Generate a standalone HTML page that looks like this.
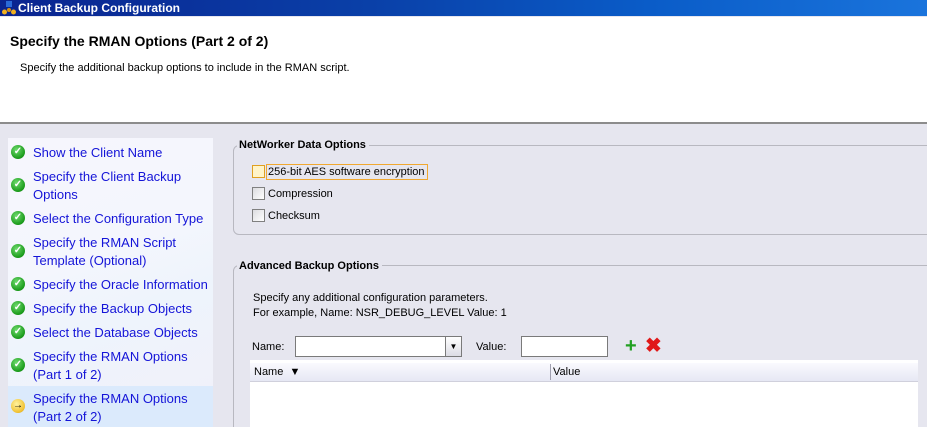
<!DOCTYPE html>
<html><head><style>
html,body{margin:0;width:927px;height:427px;overflow:hidden}
body{background:#e6e6ef;font-family:"Liberation Sans",sans-serif;position:relative}
.abs{position:absolute}
.tb{left:0;top:0;width:927px;height:16px;background:linear-gradient(90deg,#0a2490 0%,#0a40a8 40%,#0a5cc8 70%,#1a74dc 100%);color:#fff;font-weight:bold;font-size:12px;line-height:16px}
.hdr{left:0;top:17px;width:927px;height:105px;background:#fff;border-bottom:2px solid #8c8c8c}
.side{left:8px;top:138px;width:205px;height:289px;background:linear-gradient(160deg,#f6f6fd 0%,#f4f6fd 40%,#eef4fc 60%,#f1f0f9 100%)}
.it{position:absolute;left:25px;color:#1414d8;font-size:13px;line-height:18px}
.ic{position:absolute;left:11px;width:14px;height:14px;border-radius:50%;background:radial-gradient(circle at 40% 35%,#6fdc6f,#1a9a1a 70%,#0d6d0d);color:#fff;font-size:10px;line-height:14px;text-align:center;font-weight:bold}
.fs{border:1px solid #b8b8c0;border-radius:6px}
.lg{position:absolute;background:#e6e6ef;font-weight:bold;font-size:11px;padding:0 3px 0 2px}
.t{position:absolute;font-size:11px;color:#000}
.cb{position:absolute;width:11px;height:11px;border:1px solid #808080;background:linear-gradient(135deg,#dcdce0,#fff)}
</style></head><body>
<div class="abs tb"><span style="position:absolute;left:2px;top:1px;width:14px;height:14px"><svg width="14" height="14"><rect x="4" y="0" width="6" height="6" fill="#2a6ad8"/><circle cx="2.5" cy="11" r="2.5" fill="#f0b020"/><circle cx="11.5" cy="11" r="2.5" fill="#f0b020"/><circle cx="7" cy="9" r="2" fill="#d89010"/></svg></span><span style="position:absolute;left:18px">Client Backup Configuration</span></div>
<div class="abs hdr">
<div class="abs" style="left:10px;top:16px;font-weight:bold;font-size:14px">Specify the RMAN Options (Part 2 of 2)</div>
<div class="abs" style="left:20px;top:45px;font-size:11px">Specify the additional backup options to include in the RMAN script.</div>
</div>
<div class="abs side">
<div class="ic" style="top:7px;left:3px">✓</div><div class="it" style="top:6px">Show the Client Name</div>
<div class="ic" style="top:40px;left:3px">✓</div><div class="it" style="top:30px">Specify the Client Backup<br>Options</div>
<div class="ic" style="top:73px;left:3px">✓</div><div class="it" style="top:72px">Select the Configuration Type</div>
<div class="ic" style="top:106px;left:3px">✓</div><div class="it" style="top:96px">Specify the RMAN Script<br>Template (Optional)</div>
<div class="ic" style="top:139px;left:3px">✓</div><div class="it" style="top:138px">Specify the Oracle Information</div>
<div class="ic" style="top:163px;left:3px">✓</div><div class="it" style="top:162px">Specify the Backup Objects</div>
<div class="ic" style="top:187px;left:3px">✓</div><div class="it" style="top:186px">Select the Database Objects</div>
<div class="ic" style="top:220px;left:3px">✓</div><div class="it" style="top:210px">Specify the RMAN Options<br>(Part 1 of 2)</div>
<div style="position:absolute;left:0;top:248px;width:205px;height:41px;background:#dbeafc"></div>
<div class="ic" style="top:261px;left:3px;background:radial-gradient(circle at 40% 35%,#fff3a0,#f0c030 70%,#b08000);color:#000">→</div><div class="it" style="top:252px">Specify the RMAN Options<br>(Part 2 of 2)</div>
</div>
<div class="abs fs" style="left:233px;top:145px;width:710px;height:88px"></div>
<div class="lg" style="left:237px;top:139px">NetWorker Data Options</div>
<div class="cb" style="left:252px;top:165px;border-color:#e0a020;background:#fff4c8"></div>
<div class="abs" style="left:266px;top:164px;width:160px;height:14px;border:1px solid #f0a830"></div>
<div class="t" style="left:268px;top:166px">256-bit AES software encryption</div>
<div class="cb" style="left:252px;top:187px"></div><div class="t" style="left:268px;top:188px">Compression</div>
<div class="cb" style="left:252px;top:209px"></div><div class="t" style="left:268px;top:210px">Checksum</div>
<div class="abs fs" style="left:233px;top:265px;width:710px;height:180px"></div>
<div class="lg" style="left:237px;top:260px">Advanced Backup Options</div>
<div class="t" style="left:253px;top:292px">Specify any additional configuration parameters.</div>
<div class="t" style="left:253px;top:307px">For example, Name: NSR_DEBUG_LEVEL Value: 1</div>
<div class="t" style="left:252px;top:341px">Name:</div>
<div class="abs" style="left:295px;top:336px;width:149px;height:19px;border:1px solid #7a7a7a;background:#fff"></div>
<div class="abs" style="left:445px;top:336px;width:15px;height:19px;border:1px solid #7a7a7a;background:linear-gradient(#fff,#dcdce4);font-size:8px;text-align:center;line-height:19px">▼</div>
<div class="t" style="left:476px;top:341px">Value:</div>
<div class="abs" style="left:521px;top:336px;width:85px;height:19px;border:1px solid #7a7a7a;background:#fff"></div>
<div class="abs" style="left:625px;top:337px;color:#22a022;font-weight:bold;font-size:20px;line-height:18px">+</div>
<div class="abs" style="left:645px;top:337px;color:#e01818;font-weight:bold;font-size:20px;line-height:18px">✖</div>
<div class="abs" style="left:250px;top:360px;width:668px;height:67px;background:#fff"></div>
<div class="abs" style="left:250px;top:363px;width:668px;height:18px;background:linear-gradient(#fafafe,#e6e8f4);border-bottom:1px solid #d0d0dc"></div>
<div class="t" style="left:254px;top:366px">Name&nbsp;&nbsp;▼</div>
<div class="abs" style="left:550px;top:364px;width:1px;height:16px;background:#a0a0b0"></div>
<div class="t" style="left:553px;top:366px">Value</div>
</body></html>
